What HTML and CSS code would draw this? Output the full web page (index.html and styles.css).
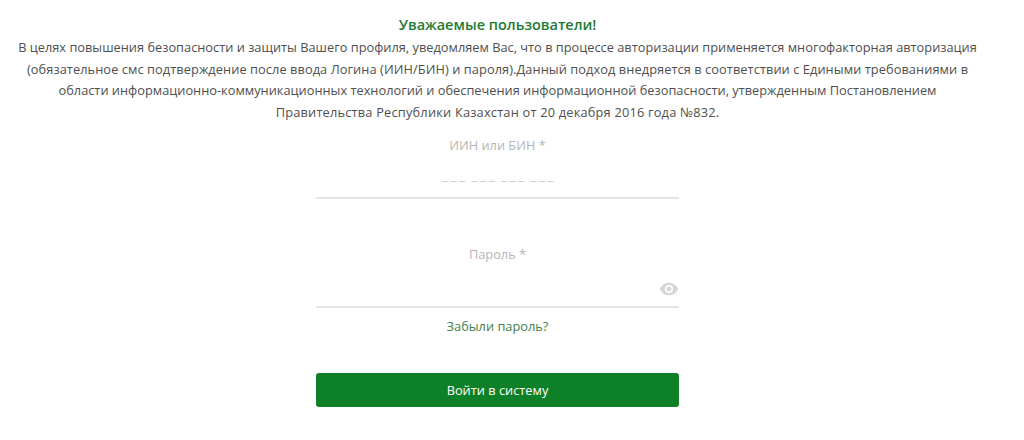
FILE: index.html
```html
<!DOCTYPE html>
<html lang="ru">
<head>
    <meta charset="UTF-8">
    <title>Вход в систему</title>
    <link rel="stylesheet" href="styles.css">
</head>
<body>
    <div class="notice">
        <h3 class="notice-title">Уважаемые пользователи!</h3>
        <p class="notice-text">В целях повышения безопасности и защиты Вашего профиля, уведомляем Вас, что в процессе авторизации применяется многофакторная авторизация<br><span class="line-second">(обязательное смс подтверждение после ввода Логина (ИИН/БИН) и пароля).Данный подход внедряется в соответствии с Едиными требованиями в</span><br>области информационно-коммуникационных технологий и обеспечения информационной безопасности, утвержденным Постановлением<br><span class="line-last">Правительства Республики Казахстан от 20 декабря 2016 года №832.</span></p>
    </div>

    <form class="login-form">
        <div class="field">
            <label class="field-label">ИИН или БИН *</label>
            <div class="field-input field-input-iin">___ ___ ___ ___</div>
        </div>
        <div class="field field-password">
            <label class="field-label">Пароль *</label>
            <div class="field-input">
                <svg class="eye" viewBox="0 0 24 24" width="20" height="20">
                    <path d="M12 4.5C7 4.5 2.73 7.61 1 12c1.73 4.39 6 7.5 11 7.5s9.27-3.11 11-7.5c-1.73-4.39-6-7.5-11-7.5zM12 17c-2.76 0-5-2.24-5-5s2.24-5 5-5 5 2.24 5 5-2.24 5-5 5zm0-8c-1.66 0-3 1.34-3 3s1.34 3 3 3 3-1.34 3-3-1.34-3-3-3z"/>
                </svg>
            </div>
        </div>
        <a class="forgot" href="#">Забыли пароль?</a>
        <button class="submit" type="button">Войти в систему</button>
    </form>
</body>
</html>
```

FILE: styles.css
```css
body {
    margin: 0;
    padding: 13px 29px 0 0;
    background: #fff;
    font-family: "Open Sans", "Noto Sans", sans-serif;
    color: #4f4f4f;
}

.notice {
    text-align: center;
}

.notice-title {
    margin: 0;
    font-size: 14.5px;
    line-height: 24px;
    font-weight: 600;
    color: #1f7a31;
}

.notice-text {
    margin: 0;
    font-size: 12.8px;
    line-height: 21.6px;
}

.line-second {
    letter-spacing: 0.07px;
}

.line-last {
    letter-spacing: 0.2px;
}

.login-form {
    width: 363px;
    margin: 12px auto 0;
    display: flex;
    flex-direction: column;
}

.field-label {
    display: block;
    text-align: center;
    font-size: 12.8px;
    line-height: 20px;
    color: #b5b5b5;
}

.field-input {
    height: 32px;
    margin-top: 10px;
    border-bottom: 2px solid #e4e4e4;
    display: flex;
    justify-content: flex-end;
    align-items: center;
}

.field-input-iin {
    justify-content: flex-start;
    align-items: flex-start;
    padding-left: 126px;
    font-size: 13px;
    line-height: 21px;
    letter-spacing: 3px;
    word-spacing: -3px;
    color: #c4c4c4;
}

.field-password {
    margin-top: 45px;
}

.eye {
    margin-bottom: 2px;
    fill: #d6d6d6;
}

.forgot {
    margin-top: 8px;
    text-align: center;
    font-size: 12.8px;
    line-height: 20px;
    color: #3f7f52;
    text-decoration: none;
}

.submit {
    height: 34px;
    margin-top: 37px;
    border: 0;
    border-radius: 3px;
    background: #0e8128;
    color: #fff;
    font-family: inherit;
    font-size: 12.8px;
    font-weight: 500;
}
```
